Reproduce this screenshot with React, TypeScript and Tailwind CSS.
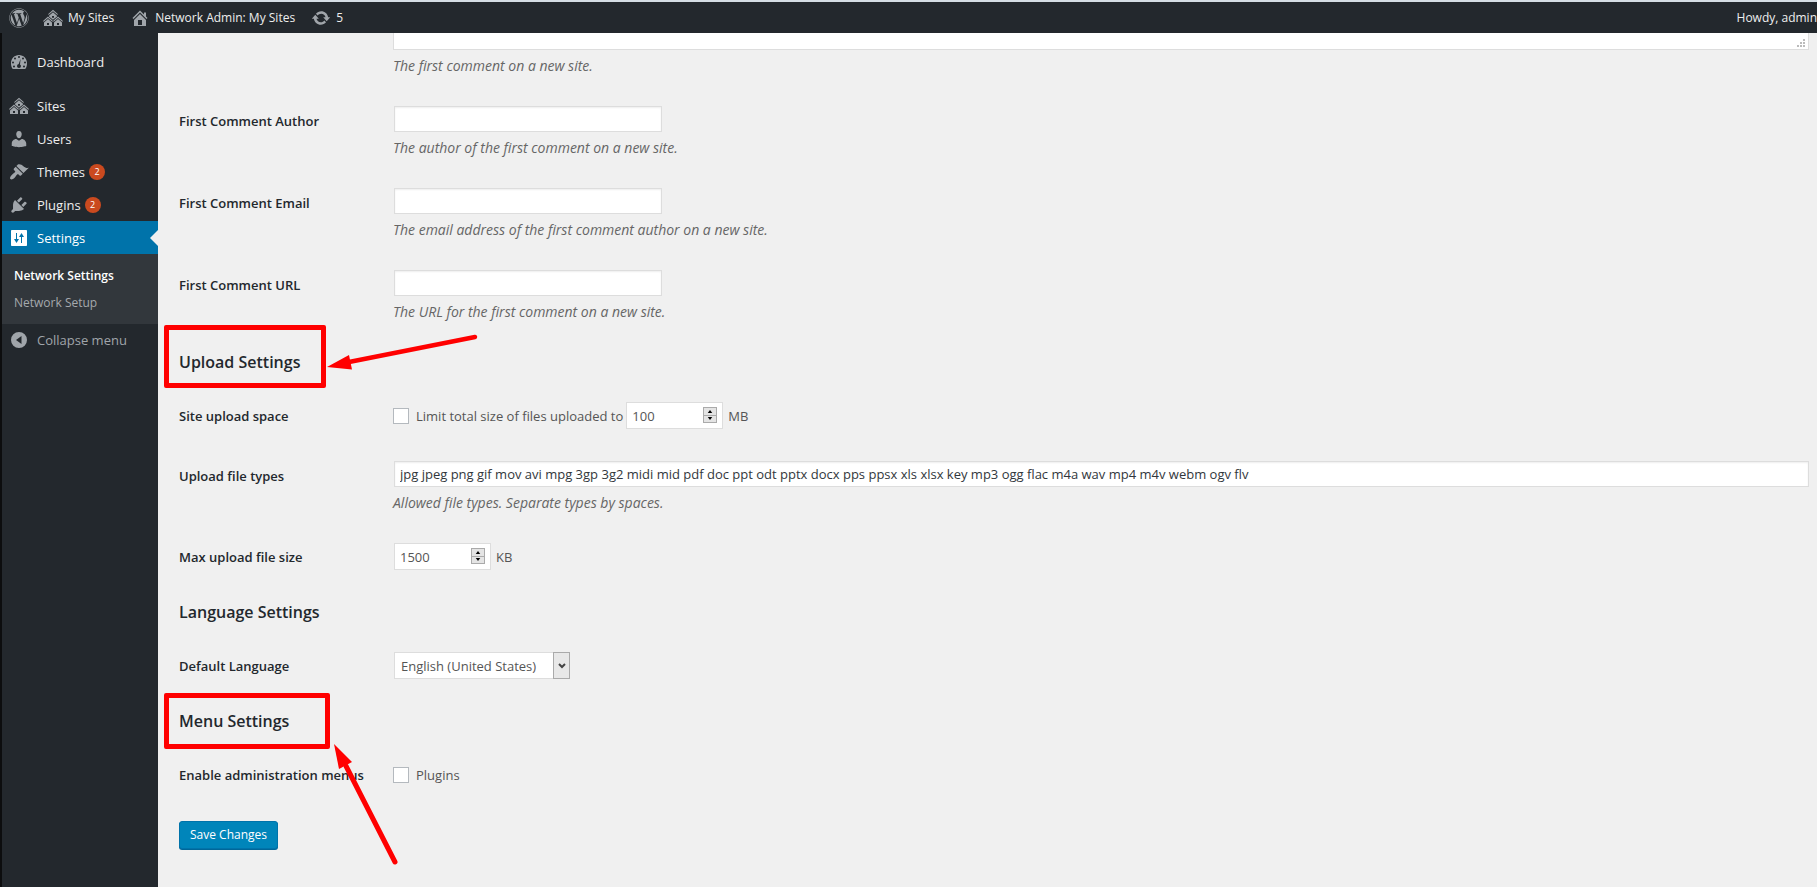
import { useState, type ReactNode } from "react";
import { FaWordpress } from "react-icons/fa";

// ── Icons (20x20 grid) ─────────────────────────────────────────────────────────

const icons = {
  home: "M16 8.5l1.53 1.53-1.06 1.06L10 4.6l-6.47 6.49-1.06-1.06L10 2.5l4 4v-2h2v4zm-6-2.46l6 5.99V18H4v-5.97zM12 17v-5H8v5h4z",
  sites: "M14.27 6.87L10 3.14 5.73 6.87 5 6.14l5-4.38 5 4.38zM14 8.42l-4.05 3.43L6 8.38v-.74l4-3.5 4 3.5v.78zM11 9.7V8H9v1.7h2zm-1.73 4.03L5 10 .73 13.73 0 13l5-4.38L10 13zm10 0L15 10l-4.27 3.73L10 13l5-4.38L20 13zM5 11l4 3.5V18H1v-3.5zm10 0l4 3.5V18h-8v-3.5zm-9 6v-2H4v2h2zm10 0v-2h-2v2h2z",
  update: "M10.2 3.28c3.53 0 6.43 2.61 6.92 6h2.08l-3.5 4-3.5-4h2.32c-.45-1.97-2.21-3.45-4.32-3.45-1.45 0-2.73.71-3.54 1.78L4.95 5.66C6.23 4.2 8.11 3.28 10.2 3.28zm-.4 13.44c-3.52 0-6.43-2.61-6.92-6H.8l3.5-4c1.17 1.33 2.33 2.67 3.5 4H5.48c.45 1.97 2.21 3.45 4.32 3.45 1.45 0 2.73-.71 3.54-1.78l1.71 1.95c-1.28 1.46-3.15 2.38-5.25 2.38z",
  dashboard: "M3.76 17h12.48c1.34-1.63 1.76-3.64 1.76-6 0-4.41-3.58-8-8-8s-8 3.59-8 8c0 2.36.42 4.37 1.76 6zM10 4a1 1 0 110 2 1 1 0 010-2zM6 5.5a1 1 0 110 2 1 1 0 010-2zM14 5.5a1 1 0 110 2 1 1 0 010-2zM4 9.5a1 1 0 110 2 1 1 0 010-2zM16 9.5a1 1 0 110 2 1 1 0 010-2zM5 13.5a1 1 0 110 2 1 1 0 010-2zM15 13.5a1 1 0 110 2 1 1 0 010-2zM11.6 6.8l-.6 5.6c.6.4 1 1 1 1.7a2 2 0 11-2.3-2z",
  users: "M10 9.25c-2.27 0-2.73-3.44-2.73-3.44C7 4.02 7.82 2 9.97 2c2.16 0 2.98 2.02 2.71 3.81 0 0-.41 3.44-2.68 3.44zm0 2.57L12.72 10c2.39 0 4.52 2.33 4.52 4.53v2.49s-3.65 1.13-7.24 1.13c-3.65 0-7.24-1.13-7.24-1.13v-2.49c0-2.25 1.94-4.48 4.47-4.48z",
  themes: "M14.48 11.06L7.41 3.99l1.5-1.5c.5-.56 2.3-.47 3.51.32 1.21.8 1.43 1.28 2.91 2.1 1.18.64 2.45 1.26 4.45.85zm-.71.71L6.7 4.7 4.93 6.47c-.39.39-.39 1.02 0 1.41l1.06 1.06c.39.39.39 1.03 0 1.42-.6.6-1.43 1.11-2.21 1.69-.35.26-.7.53-1.01.84C1.43 14.23.4 16.08 1.4 17.07c.99 1 2.84-.03 4.18-1.36.31-.31.58-.66.85-1.02.57-.78 1.08-1.61 1.69-2.21.39-.39 1.02-.39 1.41 0l1.06 1.06c.39.39 1.02.39 1.41 0z",
  plugins: "M13.11 4.36L9.87 7.6 8 5.73l3.24-3.24c.35-.34 1.05-.2 1.56.32.52.51.66 1.21.31 1.55zm-8 1.77l.91-1.12 9.01 9.01-1.19.84c-.71.71-2.63 1.16-3.82 1.16H6.14L4.9 17.26c-.59.59-1.54.59-2.12 0-.59-.58-.59-1.53 0-2.12l1.24-1.24v-3.88c0-1.13.4-3.19 1.09-3.89zm7.26 3.97l3.24-3.24c.34-.35 1.04-.21 1.55.31.52.51.66 1.21.31 1.55l-3.24 3.25z",
  settings: "M18 17V3c0-.55-.45-1-1-1H3c-.55 0-1 .45-1 1v14c0 .55.45 1 1 1h14c.55 0 1-.45 1-1zM8 11h2L7.5 15 5 11h2V5h1zM13 9v6h-1V9h-2l2.5-4L15 9z",
  collapse: "M10 2a8 8 0 100 16 8 8 0 000-16zM12.5 6v8L7 10z",
};

type IconName = keyof typeof icons;

function Icon({ name, className = "size-5" }: { name: IconName; className?: string }) {
  return (
    <svg viewBox="0 0 20 20" fill="currentColor" fillRule="evenodd" aria-hidden="true" className={`shrink-0 ${className}`}>
      <path d={icons[name]} />
    </svg>
  );
}

// ── Sidebar ────────────────────────────────────────────────────────────────────

interface NavItem {
  label: string;
  icon: IconName;
  count?: number;
  active?: boolean;
}

const navItems: NavItem[] = [
  { label: "Sites", icon: "sites" },
  { label: "Users", icon: "users" },
  { label: "Themes", icon: "themes", count: 2 },
  { label: "Plugins", icon: "plugins", count: 2 },
  { label: "Settings", icon: "settings", active: true },
];

function NavLink({ label, icon, count, active }: NavItem) {
  return (
    <a
      href="#"
      className={`relative flex h-[33px] items-center gap-2 pl-[7px] ${active ? "bg-[#0073aa] text-white" : "text-[#eee]"}`}
    >
      <Icon name={icon} className={active ? "size-5 text-white" : "size-5 text-[#a0a5aa]"} />
      {label}
      {count && (
        <span className="-ml-1 flex size-4 items-center justify-center rounded-full bg-[#ca4a1f] text-[9px] text-white">
          {count}
        </span>
      )}
      {active && (
        <span className="absolute top-1/2 right-0 -translate-y-1/2 border-y-8 border-r-8 border-y-transparent border-r-[#f0f0f0]" />
      )}
    </a>
  );
}

function Sidebar() {
  return (
    <aside className="w-[158px] shrink-0 border-l-2 border-[#0c0d0e] bg-[#23282d] pt-3">
      <nav>
        <NavLink label="Dashboard" icon="dashboard" />
        <div className="h-[11px]" />
        {navItems.map((item) => (
          <NavLink key={item.label} {...item} />
        ))}
        <div className="flex flex-col bg-[#32373c] py-2 pl-3 text-[12px] leading-[27px]">
          <a href="#" className="font-semibold text-white">Network Settings</a>
          <a href="#" className="text-[#a5a9ad]">Network Setup</a>
        </div>
      </nav>
      <button type="button" className="flex h-8 items-center gap-2 pl-[7px] text-[#a0a5aa]">
        <Icon name="collapse" />
        Collapse menu
      </button>
    </aside>
  );
}

// ── Form pieces ────────────────────────────────────────────────────────────────

const field = "ml-px h-[26px] border border-[#ddd] bg-white px-[5px] text-[#32373c] shadow-[inset_0_1px_2px_rgba(0,0,0,0.07)]";

function Row({ label, htmlFor, compact, children }: { label: string; htmlFor: string; compact?: boolean; children: ReactNode }) {
  return (
    <div className={`grid grid-cols-[214px_1fr] pt-3 ${compact ? "pb-5" : "pb-[18px]"}`}>
      <label
        htmlFor={htmlFor}
        className={`font-semibold whitespace-nowrap text-[#23282d] ${compact ? "pt-1" : "pt-[5px]"}`}
      >
        {label}
      </label>
      <div>{children}</div>
    </div>
  );
}

function Hint({ children }: { children: ReactNode }) {
  return <p className="mt-1.5 text-[14px] leading-5 text-[#666] italic">{children}</p>;
}

function NumberField({ id, initial, label }: { id: string; initial: number; label: string }) {
  const [value, setValue] = useState(initial);
  return (
    <span className="relative ml-px inline-flex">
      <input
        id={id}
        type="number"
        aria-label={label}
        value={value}
        onChange={(e) => setValue(Number(e.target.value))}
        className="h-[27px] w-[97px] border border-[#ddd] bg-white px-[5px] text-[#555] [appearance:textfield] [&::-webkit-inner-spin-button]:appearance-none"
      />
      <span className="absolute top-[5px] right-[6px] flex h-4 w-3.5 flex-col border border-[#aaa] bg-[#e4e4e4]">
        <button type="button" aria-label="Increase" onClick={() => setValue(value + 1)} className="flex flex-1 items-center justify-center border-b border-[#aaa]">
          <svg viewBox="0 0 6 4" className="h-[3px] w-1.5"><path d="M3 0l3 4H0z" /></svg>
        </button>
        <button type="button" aria-label="Decrease" onClick={() => setValue(value - 1)} className="flex flex-1 items-center justify-center">
          <svg viewBox="0 0 6 4" className="h-[3px] w-1.5"><path d="M3 4l3-4H0z" /></svg>
        </button>
      </span>
    </span>
  );
}

function Heading({ children, mark }: { children: string; mark?: ReactNode }) {
  return (
    <div className="relative pt-3 pb-[18px]">
      <h2 className="text-[16px] leading-5 font-semibold text-[#23282d]">{children}</h2>
      {mark}
    </div>
  );
}

const checkbox = "size-4 shrink-0 appearance-none border border-[#b4b9be] bg-white";

const commentFields = [
  { id: "author", label: "First Comment Author", hint: "The author of the first comment on a new site." },
  { id: "email", label: "First Comment Email", hint: "The email address of the first comment author on a new site." },
  { id: "url", label: "First Comment URL", hint: "The URL for the first comment on a new site." },
];

// ── Page ───────────────────────────────────────────────────────────────────────

export default function App() {
  return (
    <div className="flex h-screen flex-col overflow-hidden bg-[#f0f0f0] font-['Open_Sans',sans-serif] text-[13px] leading-5 text-[#555]">
      <header className="flex h-[33px] shrink-0 items-center border-t-2 border-[#d5dde4] bg-[#23282d] pt-px pl-[9px] text-[12px] text-[#eee]">
        <a href="#" aria-label="About WordPress"><FaWordpress className="size-5 text-[#a0a5aa]" /></a>
        <a href="#" className="ml-3.5 flex items-center gap-[5px]">
          <Icon name="sites" className="size-5 text-[#a0a5aa]" />
          My Sites
        </a>
        <a href="#" className="ml-4 flex items-center gap-[5px]">
          <Icon name="home" className="size-5 text-[#a0a5aa]" />
          Network Admin: My Sites
        </a>
        <a href="#" className="ml-4 flex items-center gap-[5px]">
          <Icon name="update" className="size-5 text-[#a0a5aa]" />
          5
        </a>
        <a href="#" className="ml-auto whitespace-nowrap">Howdy, admin</a>
      </header>

      <div className="flex min-h-0 flex-1">
        <Sidebar />

        <main className="min-w-0 flex-1 pr-2 pl-[21px]">
          <form onSubmit={(e) => e.preventDefault()}>
            <div className="grid grid-cols-[214px_1fr] pb-[18px]">
              <span />
              <div>
                <div className="relative">
                  <textarea aria-label="First Comment" className="block h-[17px] w-full resize-none border border-t-0 border-[#ddd] bg-white" />
                  <svg viewBox="0 0 8 8" fill="#bbb" className="absolute right-1 bottom-[3px] size-2" aria-hidden="true">
                    <path d="M6 0h2v2H6zM6 3h2v2H6zM3 3h2v2H3zM6 6h2v2H6zM3 6h2v2H3zM0 6h2v2H0z" />
                  </svg>
                </div>
                <Hint>The first comment on a new site.</Hint>
              </div>
            </div>

            {commentFields.map((f) => (
              <Row key={f.id} label={f.label} htmlFor={f.id}>
                <input id={f.id} type="text" className={`block w-[268px] ${field}`} />
                <Hint>{f.hint}</Hint>
              </Row>
            ))}

            <Heading
              mark={
                <>
                  <div className="pointer-events-none absolute -top-[15px] -left-[15px] h-[63px] w-[162px] rounded-xs border-5 border-[#f00]" />
                  <svg viewBox="0 0 152 40" className="pointer-events-none absolute -top-[7px] left-[148px] z-10 h-10 w-[152px]" aria-hidden="true">
                    <path d="M148 4L22 29" stroke="#f00" strokeWidth="4.5" strokeLinecap="round" />
                    <path d="M0 34L22 22l3 14.5z" fill="#f00" />
                  </svg>
                </>
              }
            >
              Upload Settings
            </Heading>

            <Row label="Site upload space" htmlFor="limit" compact>
              <div className="flex items-center">
                <input id="limit" type="checkbox" className={checkbox} />
                <label htmlFor="limit" className="mr-0.5 ml-[7px]">Limit total size of files uploaded to</label>
                <NumberField id="space" initial={100} label="Site upload space in MB" />
                <label htmlFor="space" className="ml-[5px]">MB</label>
              </div>
            </Row>
            <Row label="Upload file types" htmlFor="types">
              <div className="flex">
                <input
                  id="types"
                  type="text"
                  className={`min-w-0 flex-1 ${field}`}
                  defaultValue="jpg jpeg png gif mov avi mpg 3gp 3g2 midi mid pdf doc ppt odt pptx docx pps ppsx xls xlsx key mp3 ogg flac m4a wav mp4 m4v webm ogv flv"
                />
              </div>
              <Hint>Allowed file types. Separate types by spaces.</Hint>
            </Row>
            <Row label="Max upload file size" htmlFor="max" compact>
              <div className="flex items-center">
                <NumberField id="max" initial={1500} label="Max upload file size in KB" />
                <span className="ml-[5px]">KB</span>
              </div>
            </Row>

            <Heading>Language Settings</Heading>

            <Row label="Default Language" htmlFor="language" compact>
              <span className="relative ml-px inline-flex">
                <select id="language" className="h-[27px] w-[176px] appearance-none border border-[#ddd] bg-white pr-5 pl-1.5 text-[#555]">
                  <option>English (United States)</option>
                </select>
                <span className="pointer-events-none absolute inset-y-0 right-0 flex w-[17px] items-center justify-center border border-[#aaa] bg-[#e8e8e8]">
                  <svg viewBox="0 0 8 6" fill="none" stroke="#444" strokeWidth="2" className="h-1.5 w-2"><path d="M1 1l3 3 3-3" /></svg>
                </span>
              </span>
            </Row>

            <Heading
              mark={
                <>
                  <div className="pointer-events-none absolute -top-1.5 -left-[15px] h-14 w-[166px] rounded-xs border-5 border-[#f00]" />
                  <svg viewBox="0 0 68 124" className="pointer-events-none absolute top-[45px] left-[155px] z-10 h-[124px] w-[68px]" aria-hidden="true">
                    <path d="M61 118L12 22" stroke="#f00" strokeWidth="5" strokeLinecap="round" />
                    <path d="M0 0l18 18-13 7z" fill="#f00" />
                  </svg>
                </>
              }
            >
              Menu Settings
            </Heading>

            <Row label="Enable administration menus" htmlFor="menus" compact>
              <div className="flex h-[27px] items-center gap-[7px]">
                <input id="menus" type="checkbox" className={checkbox} />
                <label htmlFor="menus">Plugins</label>
              </div>
            </Row>

            <button type="submit" className="mt-[13px] flex h-7 items-center rounded-[3px] border border-[#0073aa] bg-[#0085ba] px-2.5 text-[12px] text-white shadow-[0_1px_0_#006799]">
              Save Changes
            </button>
          </form>
        </main>
      </div>
    </div>
  );
}
